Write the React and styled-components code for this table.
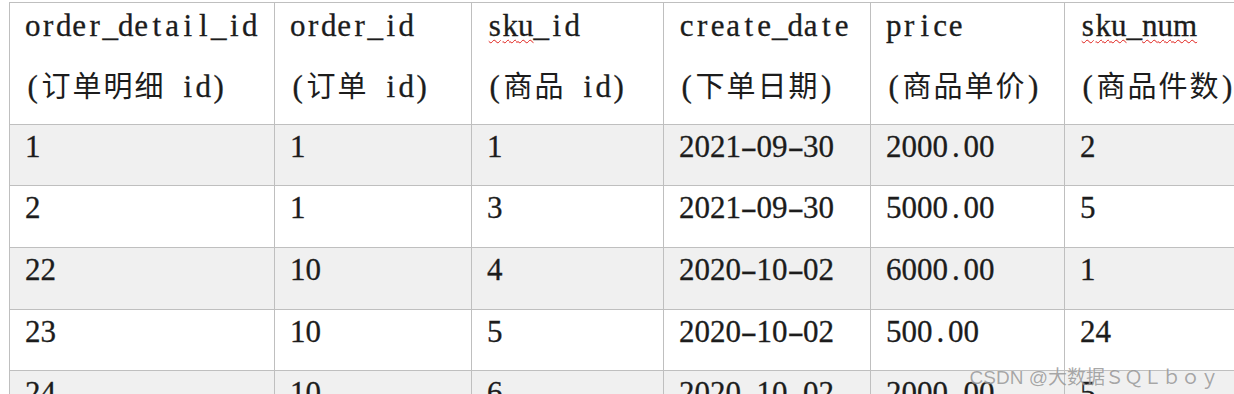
import React from 'react'
import styled, { createGlobalStyle } from 'styled-components'

const GlobalStyle = createGlobalStyle`
  html, body {
    margin: 0;
    padding: 0;
    background: #fff;
    overflow: hidden;
  }
`

const Page = styled.div`
  position: relative;
  width: 1234px;
  height: 394px;
  overflow: hidden;
  box-sizing: border-box;
  padding: 2px 0 0 9px;
  font-family: 'Liberation Serif', 'Noto Sans CJK SC', serif;
  font-size: 31px;
  color: #1c1c1c;
  -webkit-text-stroke: 0.3px #1c1c1c;
`

const Table = styled.div`
  width: max-content;
  border-top: 1px solid #bfbfbf;
  border-left: 1px solid #bfbfbf;
`

const Row = styled.div`
  display: grid;
  grid-template-columns: 265px 197px 192px 207px 194px 220px;
  height: ${(p) => p.$h}px;
  background: ${(p) => (p.$shade ? '#f0f0f0' : '#fff')};
`

const Cell = styled.div`
  box-sizing: border-box;
  border-right: 1px solid #bfbfbf;
  border-bottom: 1px solid #bfbfbf;
  padding: ${(p) => (p.$head ? '6px' : '5px')} 0 0 15px;
  white-space: nowrap;
  overflow: hidden;
`

const Line = styled.div`
  height: 34px;
  line-height: 34px;

  & + & {
    margin-top: 24px;
  }
`

// SimSun style: latin chars take half a cell, CJK chars a full one
const Half = styled.span`
  display: inline-block;
  width: 15.5px;
  text-align: center;
  transform: ${(p) => (p.$dash ? 'scaleX(1.6)' : 'none')};
  text-decoration: ${(p) => (p.$typo ? 'underline wavy #e0201a' : 'none')};
  text-decoration-thickness: 1px;
  text-underline-offset: 3px;
`

const Wide = styled.span`
  display: inline-block;
  width: 31px;
  text-align: center;
  font-family: 'Noto Sans CJK SC', sans-serif;
  font-size: 29px;
  -webkit-text-stroke: 0;
`

const Watermark = styled.div`
  position: absolute;
  right: 15px;
  bottom: 5px;
  font-family: 'Liberation Sans', 'Noto Sans CJK SC', sans-serif;
  font-size: 19px;
  line-height: 22px;
  color: rgba(110, 110, 110, 0.6);
  -webkit-text-stroke: 0;
  text-shadow: 0 0 1px rgba(255, 255, 255, 0.7);
  white-space: nowrap;
`

const isWide = (ch) => /[\u3000-\u9fff\uff00-\uffef]/.test(ch)

function Sim({ text, typo }) {
  return [...text].map((ch, i) =>
    isWide(ch) ? (
      <Wide key={i}>{ch}</Wide>
    ) : (
      <Half key={i} $typo={typo} $dash={ch === '-'}>
        {ch === ' ' ? '\u00a0' : ch}
      </Half>
    )
  )
}

const headers = [
  [<Sim text="order_detail_id" />, '(订单明细 id)'],
  [<Sim text="order_id" />, '(订单 id)'],
  [
    <>
      <Sim text="sku" typo />
      <Sim text="_id" />
    </>,
    '(商品 id)',
  ],
  [<Sim text="create_date" />, '(下单日期)'],
  [<Sim text="price" />, '(商品单价)'],
  [
    <>
      <Sim text="sku" typo />
      <Sim text="_" />
      <Sim text="num" typo />
    </>,
    '(商品件数)',
  ],
]

const rows = [
  ['1', '1', '1', '2021-09-30', '2000.00', '2'],
  ['2', '1', '3', '2021-09-30', '5000.00', '5'],
  ['22', '10', '4', '2020-10-02', '6000.00', '1'],
  ['23', '10', '5', '2020-10-02', '500.00', '24'],
  ['24', '10', '6', '2020-10-02', '2000.00', '5'],
]

const rowHeights = [61, 62, 62, 61, 62]

export default function App() {
  return (
    <Page>
      <GlobalStyle />
      <Table>
        <Row $h={122}>
          {headers.map(([name, label], i) => (
            <Cell key={i} $head>
              <Line>{name}</Line>
              <Line>
                <Sim text={label} />
              </Line>
            </Cell>
          ))}
        </Row>
        {rows.map((row, r) => (
          <Row key={r} $h={rowHeights[r]} $shade={r % 2 === 0}>
            {row.map((value, c) => (
              <Cell key={c}>
                <Line>
                  <Sim text={value} />
                </Line>
              </Cell>
            ))}
          </Row>
        ))}
      </Table>
      <Watermark>CSDN @大数据ＳＱＬｂｏｙ</Watermark>
    </Page>
  )
}
